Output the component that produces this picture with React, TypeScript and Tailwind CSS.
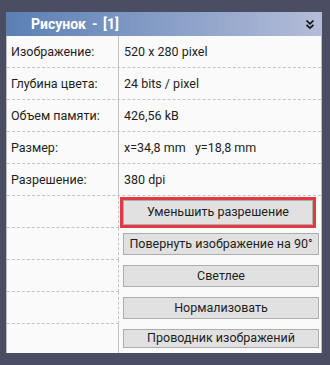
import React from "react";

const info = [
  { label: "Изображение:", value: "520 x 280 pixel" },
  { label: "Глубина цвета:", value: "24 bits / pixel" },
  { label: "Объем памяти:", value: "426,56 kB" },
  { label: "Размер:", value: "x=34,8 mm\u00a0\u00a0\u00a0y=18,8 mm" },
  { label: "Разрешение:", value: "380 dpi" },
];

const actions = [
  "Уменьшить разрешение",
  "Повернуть изображение на 90°",
  "Светлее",
  "Нормализовать",
  "Проводник изображений",
];

function Chevrons() {
  return (
    <svg width="10" height="11" viewBox="0 0 10 11" fill="none" stroke="#111" strokeWidth="1.7">
      <path d="M1.5 1.5 L5 4.8 L8.5 1.5" />
      <path d="M1.5 5.8 L5 9.1 L8.5 5.8" />
    </svg>
  );
}

export default function App() {
  return (
    <div
      className="w-[330px] h-[365px] bg-[#4b4e63] pt-[12px] pl-[6px]"
      style={{ fontFamily: 'Roboto, "Noto Sans", sans-serif' }}
    >
      <div className="w-[316px] bg-[#fafafa]">
        <div className="h-[24px] flex items-center justify-between pl-[25px] pr-[7px] bg-gradient-to-r from-[#5a80b4] to-[#b4bcd8]">
          <div className="flex items-center text-white font-bold text-[14px] leading-none whitespace-nowrap">
            <span className="w-[61px] shrink-0">Рисунок</span>
            <span className="w-[11px] shrink-0">-</span>
            <span>[1]</span>
          </div>
          <Chevrons />
        </div>
        <div className="border-l border-[#bdbdbd] border-r">
          {info.map((r) => (
            <div key={r.label} className="flex h-8 border-b border-dashed border-[#c4c4c4]">
              <div className="w-[112px] flex items-center pl-[4px] pt-[1px] text-[12.5px] text-[#1e1e1e] border-r border-solid border-r-[#c4c4c4]">
                {r.label}
              </div>
              <div className="flex-1 flex items-center pl-[5px] pt-[1px] text-[12.5px] text-[#1e1e1e]">
                {r.value}
              </div>
            </div>
          ))}
          {actions.map((a, i) => (
            <div key={a} className={`flex ${i === actions.length - 1 ? "h-[29px]" : "h-8"}`}>
              <div
                className={`w-[112px] border-r border-r-[#c4c4c4] ${
                  i === actions.length - 1 ? "" : "border-b border-dashed border-b-[#c4c4c4]"
                }`}
              />
              <div className="flex-1 pl-[4px] pr-[2px] flex items-start">
                {i === 0 ? (
                  <div className="mt-[1px] w-full h-[31px] border-[3px] border-[#e23a44] ml-[-3px] mr-[-3px] flex">
                    <div className="flex-1 bg-[#e1e1e1] border border-[#adadad] flex items-center justify-center text-[12.5px] text-[#1e1e1e]">
                      {a}
                    </div>
                  </div>
                ) : (
                  <div
                    className={`w-full ${i === actions.length - 1 ? "mt-[5px] h-[19px]" : "mt-[5px] h-[22px]"} bg-[#e1e1e1] border border-[#adadad] flex items-center justify-center text-[12.5px] text-[#1e1e1e]`}
                  >
                    {a}
                  </div>
                )}
              </div>
            </div>
          ))}
        </div>
      </div>
    </div>
  );
}
